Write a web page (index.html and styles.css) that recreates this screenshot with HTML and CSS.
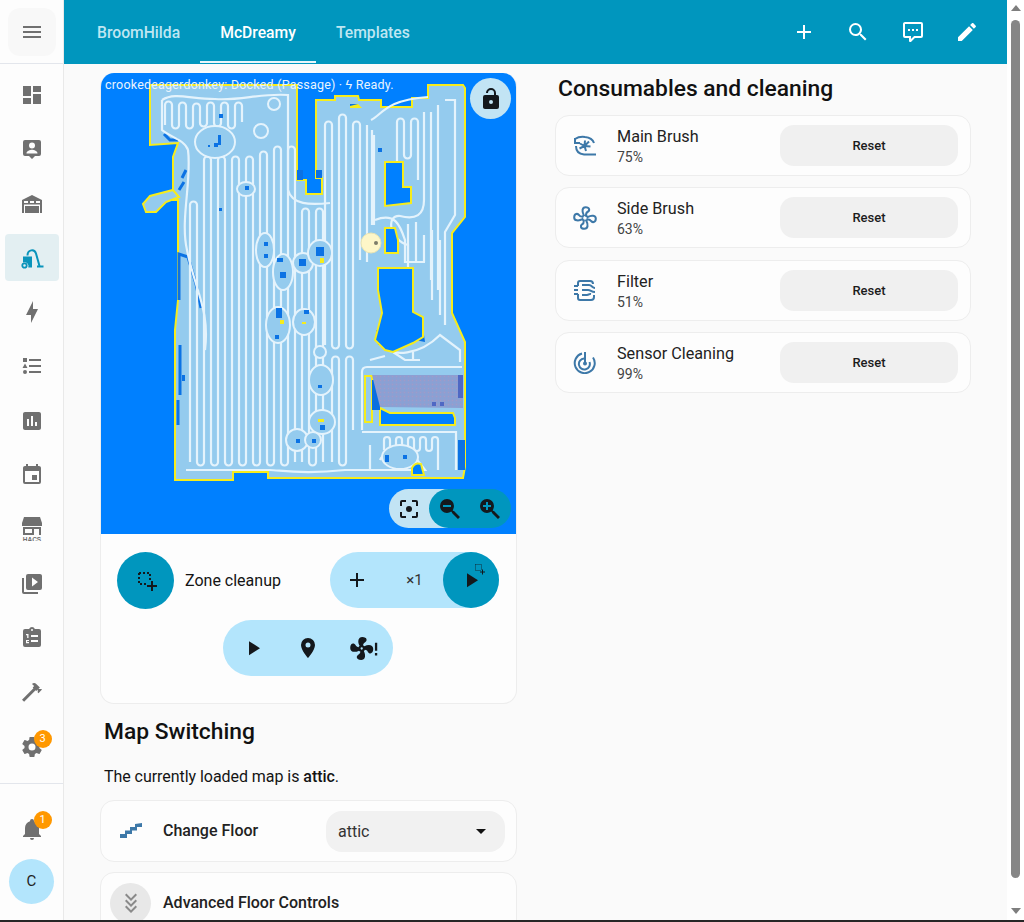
FILE: index.html
```html
<!DOCTYPE html>
<html lang="en">
<head>
  <meta charset="UTF-8">
  <title>McDreamy</title>
  <link rel="stylesheet" href="styles.css">
</head>
<body>
<div class="app">

  <aside class="sidebar">
    <div class="sidebar-head">
      <button class="menu-btn"><svg class="icon" viewBox="0 0 24 24"><path d="M3,6H21V8H3V6M3,11H21V13H3V11M3,16H21V18H3V16Z"/></svg></button>
    </div>
    <nav class="nav">
      <a class="nav-item"><svg class="icon" viewBox="0 0 24 24"><path d="M13,3V9H21V3M13,21H21V11H13M3,21H11V15H3M3,13H11V3H3V13Z"/></svg></a>
      <a class="nav-item"><svg class="icon" viewBox="0 0 24 24"><path fill-rule="evenodd" d="M5,3H19A2,2 0 0,1 21,5V17A2,2 0 0,1 19,19H15L12,22L9,19H5A2,2 0 0,1 3,17V5A2,2 0 0,1 5,3M12,5.5A3,3 0 0,0 12,11.5A3,3 0 0,0 12,5.5M6.5,16.5H17.5C17.5,14 14,12.8 12,12.8C10,12.8 6.5,14 6.5,16.5Z"/></svg></a>
      <a class="nav-item"><svg class="icon" viewBox="0 0 24 24"><path fill-rule="evenodd" d="M12,3L2,8V21H22V8L12,3M4,9H8V11H4V9M10,9H14V11H10V9M16,9H20V11H16V9M4,12.5H20V21H19V14H5V21H4V12.5Z"/><path d="M8,15.5H10V17.5H8ZM11.5,15.5H13.5V17.5H11.5ZM8,18.5H10V20.5H8ZM11.5,18.5H13.5V20.5H11.5ZM15,18.5H17V20.5H15Z"/></svg></a>
      <a class="nav-item active"><svg class="icon" viewBox="0 0 24 24"><path d="M7.5,9.5C7.5,3.5 14.5,2.5 16,7.5L19.5,20" fill="none" stroke="currentColor" stroke-width="2"/><path d="M17,19.5H23.5V21.5H17ZM3,10.5H12V21.5H8.3A4,4 0 0,0 3,16.5Z"/><circle cx="4.5" cy="19.5" r="2.2" fill="none" stroke="currentColor" stroke-width="1.8"/></svg></a>
      <a class="nav-item"><svg class="icon" viewBox="0 0 24 24"><path d="M11 15H6L13 1V9H18L11 23V15Z"/></svg></a>
      <a class="nav-item"><svg class="icon" viewBox="0 0 24 24"><path d="M5,9.5L7.5,14H2.5L5,9.5M3,4H7V8H3V4M5,20A2,2 0 0,0 7,18A2,2 0 0,0 5,16A2,2 0 0,0 3,18A2,2 0 0,0 5,20M9,5V7H21V5H9M9,19H21V17H9V19M9,13H21V11H9V13Z"/></svg></a>
      <a class="nav-item"><svg class="icon" viewBox="0 0 24 24"><path fill-rule="evenodd" d="M19 3H5C3.9 3 3 3.9 3 5V19C3 20.1 3.9 21 5 21H19C20.1 21 21 20.1 21 19V5C21 3.9 20.1 3 19 3M9 17H7V10H9V17M13 17H11V7H13V17M17 17H15V13H17V17Z"/></svg></a>
      <a class="nav-item"><svg class="icon" viewBox="0 0 24 24"><path d="M19,19H5V8H19M16,1V3H8V1H6V3H5C3.89,3 3,3.89 3,5V19A2,2 0 0,0 5,21H19A2,2 0 0,0 21,19V5C21,3.89 20.1,3 19,3H18V1M17,12H12V17H17V12Z"/></svg></a>
      <a class="nav-item"><svg class="icon" viewBox="0 0 24 24"><path d="M4,0H20L22,6V9H2V6ZM3,10H21V18H19V12H14V18H3ZM5,12V16H12V12Z"/><text class="hacs-text" x="12" y="24.5" text-anchor="middle">HACS</text></svg></a>
      <a class="nav-item"><svg class="icon" viewBox="0 0 24 24"><path d="M4,6H2V20A2,2 0 0,0 4,22H18V20H4V6M20,2H8A2,2 0 0,0 6,4V16A2,2 0 0,0 8,18H20A2,2 0 0,0 22,16V4C22,2.89 21.1,2 20,2M12,14.5V5.5L18,10L12,14.5Z"/></svg></a>
      <a class="nav-item"><svg class="icon" viewBox="0 0 24 24"><path fill-rule="evenodd" d="M19,3H14.82C14.4,1.84 13.3,1 12,1C10.7,1 9.6,1.84 9.18,3H5A2,2 0 0,0 3,5V19A2,2 0 0,0 5,21H19A2,2 0 0,0 21,19V5A2,2 0 0,0 19,3M12,3A1,1 0 0,1 12,5A1,1 0 0,1 12,3M11,9H18V11H11V9M11,14H18V16H11V14M6,8H8.5V12H7.2V9.2H6V8M6,14H9V15H7.2V16H9V17.2H6V14Z"/></svg></a>
      <a class="nav-item"><svg class="icon" viewBox="0 0 24 24"><path d="M2 19.63L13.43 8.2L12.72 7.5L14.14 6.07L12 3.89C13.2 2.7 15.09 2.7 16.27 3.89L19.87 7.5L18.45 8.91H21.29L22 9.62L18.45 13.21L17.74 12.5V9.62L16.27 11.04L15.56 10.33L4.13 21.76L2 19.63Z"/></svg></a>
      <a class="nav-item"><svg class="icon" viewBox="0 0 24 24"><path d="M12,15.5A3.5,3.5 0 0,1 8.5,12A3.5,3.5 0 0,1 12,8.5A3.5,3.5 0 0,1 15.5,12A3.5,3.5 0 0,1 12,15.5M19.43,12.97C19.47,12.65 19.5,12.33 19.5,12C19.5,11.67 19.47,11.34 19.43,11L21.54,9.37C21.73,9.22 21.78,8.95 21.66,8.73L19.66,5.27C19.54,5.05 19.27,4.96 19.05,5.05L16.56,6.05C16.04,5.66 15.5,5.32 14.87,5.07L14.5,2.42C14.46,2.18 14.25,2 14,2H10C9.75,2 9.54,2.18 9.5,2.42L9.13,5.07C8.5,5.32 7.96,5.66 7.44,6.05L4.95,5.05C4.73,4.96 4.46,5.05 4.34,5.27L2.34,8.73C2.21,8.95 2.27,9.22 2.46,9.37L4.57,11C4.53,11.34 4.5,11.67 4.5,12C4.5,12.33 4.53,12.65 4.57,12.97L2.46,14.63C2.27,14.78 2.21,15.05 2.34,15.27L4.34,18.73C4.46,18.95 4.73,19.03 4.95,18.95L7.44,17.94C7.96,18.34 8.5,18.68 9.13,18.93L9.5,21.58C9.54,21.82 9.75,22 10,22H14C14.25,22 14.46,21.82 14.5,21.58L14.87,18.93C15.5,18.67 16.04,18.34 16.56,17.94L19.05,18.95C19.27,19.03 19.54,18.95 19.66,18.73L21.66,15.27C21.78,15.05 21.73,14.78 21.54,14.63L19.43,12.97Z"/></svg><span class="badge">3</span></a>
    </nav>
    <div class="sidebar-foot">
      <a class="nav-item"><svg class="icon" viewBox="0 0 24 24"><path d="M21,19V20H3V19L5,17V11C5,7.9 7.03,5.17 10,4.29C10,4.19 10,4.1 10,4A2,2 0 0,1 12,2A2,2 0 0,1 14,4C14,4.1 14,4.19 14,4.29C16.97,5.17 19,7.9 19,11V17L21,19M14,21A2,2 0 0,1 12,23A2,2 0 0,1 10,21"/></svg><span class="badge">1</span></a>
      <div class="avatar">C</div>
    </div>
  </aside>

  <div class="workspace">
    <header class="topbar">
      <div class="tabs">
        <a class="tab">BroomHilda</a>
        <a class="tab active">McDreamy</a>
        <a class="tab">Templates</a>
      </div>
      <div class="top-actions">
        <svg class="icon" viewBox="0 0 24 24"><path d="M19,13H13V19H11V13H5V11H11V5H13V11H19V13Z"/></svg>
        <svg class="icon" viewBox="0 0 24 24"><path d="M9.5,3A6.5,6.5 0 0,1 16,9.5C16,11.11 15.41,12.59 14.44,13.73L14.71,14H15.5L20.5,19L19,20.5L14,15.5V14.71L13.73,14.44C12.59,15.41 11.11,16 9.5,16A6.5,6.5 0 0,1 3,9.5A6.5,6.5 0 0,1 9.5,3M9.5,5C7,5 5,7 5,9.5C5,12 7,14 9.5,14C12,14 14,12 14,9.5C14,7 12,5 9.5,5Z"/></svg>
        <svg class="icon" viewBox="0 0 24 24"><path d="M9,22A1,1 0 0,1 8,21V18H4A2,2 0 0,1 2,16V4C2,2.89 2.9,2 4,2H20A2,2 0 0,1 22,4V16A2,2 0 0,1 20,18H13.9L10.2,21.71C10,21.9 9.75,22 9.5,22V22H9M10,16V19.08L13.08,16H20V4H4V16H10M17,11H15V9H17V11M13,11H11V9H13V11M9,11H7V9H9V11Z"/></svg>
        <svg class="icon" viewBox="0 0 24 24"><path d="M20.71,7.04C21.1,6.65 21.1,6 20.71,5.63L18.37,3.29C18,2.9 17.35,2.9 16.96,3.29L15.12,5.12L18.87,8.87M3,17.25V21H6.75L17.81,9.93L14.06,6.18L3,17.25Z"/></svg>
      </div>
    </header>

    <main class="content">
      <section class="column">
        <div class="card vacuum-card">
          <div class="map">
            <svg class="map-svg" viewBox="100 73 417 461">
              <defs>
                <pattern id="dither" width="4" height="4" patternUnits="userSpaceOnUse">
                  <rect width="4" height="4" fill="#8d9fd2"/>
                  <rect width="1" height="1" fill="#a59ac4"/>
                  <rect x="2" y="2" width="1" height="1" fill="#7fa6d8"/>
                </pattern>
              </defs>
              <!-- floor -->
              <path class="floor" d="M150 85H297V180H306V194H322V178H316V100H335V96H358L359 100H381V107H412V98H428V85H463L465 88V217L452 233V313L465 342V467L463 478H268V472H233V480H175V330L178 300V200L173 200V157L178 143L150 145Z"/>
              <path class="floor" d="M143 204L150 196L173 190L179 197L166 202L156 212L146 212Z"/>
              <!-- darker edges -->
              <path class="dark-edge" d="M179 300V254L188 257L196 284L201 308M180 345V395M178 400V425M164 134L170 140H178M182 178L186 170M179 190L184 182"/>
              <path class="dark" d="M297 170H303V180H297ZM316 178H322V170H316ZM458 440H465V470H458ZM376 330L386 335L389 345H378ZM415 340L424 335L425 342ZM358 108H350V104H358Z"/>
              <!-- cleaning paths -->
              <path class="trail" d="M190 462V205a3.5 3.5 0 0 1 7 0V462a3.5 3.5 0 0 0 7 0V160a3.5 3.5 0 0 1 7 0V462a3.5 3.5 0 0 0 7 0V160a3.5 3.5 0 0 1 7 0V462a3.5 3.5 0 0 0 7 0V160a3.5 3.5 0 0 1 7 0V462a3.5 3.5 0 0 0 7 0V160a3.5 3.5 0 0 1 7 0V462a3.5 3.5 0 0 0 7 0V155a3.5 3.5 0 0 1 7 0V462a3.5 3.5 0 0 0 7 0V150a3.5 3.5 0 0 1 7 0V462a3.5 3.5 0 0 0 7 0V150a3.5 3.5 0 0 1 7 0V462"/>
              <path class="trail" d="M302 462V212a3.5 3.5 0 0 1 7 0V462a3.5 3.5 0 0 0 7 0V212a3.5 3.5 0 0 1 7 0V462"/>
              <path class="trail" d="M165 125V105a3.5 3.5 0 0 1 7 0V125a3.5 3.5 0 0 0 7 0V106a3.5 3.5 0 0 1 7 0V125a3.5 3.5 0 0 0 7 0V107a3.5 3.5 0 0 1 7 0V123a3.5 3.5 0 0 0 7 0V106a3.5 3.5 0 0 1 7 0V123a3.5 3.5 0 0 0 7 0V106a3.5 3.5 0 0 1 7 0V125a3.5 3.5 0 0 0 7 0V106a3.5 3.5 0 0 1 7 0V122"/>
              <path class="trail" d="M162 100C175 92 190 99 215 99C240 101 260 93 288 95V190C292 205 310 205 330 203"/>
              <path class="trail" d="M162 100V130C170 137 185 140 188 150C192 180 180 220 187 250C195 290 210 310 205 350"/>
              <path class="trail" d="M325 345V125a3.5 3.5 0 0 1 7 0V345a3.5 3.5 0 0 0 7 0V118a3.5 3.5 0 0 1 7 0V345a3.5 3.5 0 0 0 7 0V125a3.5 3.5 0 0 1 7 0V260M367 262V125M374 225V135"/>
              <path class="trail" d="M332 462V360a3.5 3.5 0 0 1 7 0V462a3.5 3.5 0 0 0 7 0V360a3.5 3.5 0 0 1 7 0V430"/>
              <path class="trail" d="M397 165V122a3.5 3.5 0 0 1 7 0V155a3.5 3.5 0 0 0 7 0V122a3.5 3.5 0 0 1 7 0V180M424 112V200C424 215 416 220 400 216C385 215 390 240 408 245V262M431 112V280M438 105V290M445 100H455V215L445 232V325M371 120C382 115 385 100 428 97M372 130V225"/>
              <path class="trail" d="M375 220C395 212 400 225 405 240V262H425M408 224V270M416 222V262M424 235V262M432 230V300M440 240V315M382 345C392 358 420 355 440 335L460 350V362"/>
              <path class="trail" d="M385 356L370 360M393 352L405 360H420M413 352V360"/>
              <path class="trail" d="M362 430V372Q362 367 367 367H462M362 432H456V470M384 450V440a3 3 0 0 1 6 0V448a3 3 0 0 0 6 0V440a3 3 0 0 1 6 0V448a3 3 0 0 0 6 0V440a3 3 0 0 1 6 0V448a3 3 0 0 0 6 0V440a3 3 0 0 1 6 0V448a3 3 0 0 0 6 0V440a3 3 0 0 1 6 0V470M370 445V470H425L408 448C395 445 382 455 380 460"/>
              <path class="trail" d="M186 470H270C280 470 300 475 345 470H400"/>
              <!-- round rooms -->
              <ellipse class="blob" cx="215" cy="142" rx="20" ry="16"/>
              <circle class="blob" cx="261" cy="131" r="7"/>
              <circle class="blob" cx="274" cy="104" r="6"/>
              <ellipse class="blob" cx="246" cy="189" rx="9" ry="7"/>
              <ellipse class="blob" cx="265" cy="250" rx="9" ry="17"/>
              <ellipse class="blob" cx="283" cy="272" rx="10" ry="18"/>
              <circle class="blob" cx="303" cy="263" r="10"/>
              <ellipse class="blob" cx="320" cy="253" rx="12" ry="13"/>
              <ellipse class="blob" cx="278" cy="325" rx="12" ry="18"/>
              <ellipse class="blob" cx="304" cy="322" rx="11" ry="13"/>
              <ellipse class="blob" cx="321" cy="380" rx="12" ry="15"/>
              <ellipse class="blob" cx="322" cy="422" rx="13" ry="12"/>
              <circle class="blob" cx="297" cy="440" r="11"/>
              <circle class="blob" cx="313" cy="440" r="8"/>
              <circle class="blob" cx="320" cy="352" r="6"/>
              <ellipse class="blob" cx="400" cy="457" rx="18" ry="12"/>
              <!-- specks -->
              <path class="dark" d="M218 135H221V145H218ZM214 143H218V147H214ZM208 145H210V147H208ZM245 186H249V190H245ZM264 242H268V246H264ZM264 254H268V258H264ZM277 258H283V262H277ZM280 272H286V278H280ZM299 259H306V266H299ZM316 247H324V256H316ZM276 308H282V318H276ZM304 310H309V314H304ZM275 335H279V339H275ZM320 425H325V430H320ZM296 439H300V443H296ZM312 439H316V443H312ZM385 455H389V462H385ZM403 455H407V459H403ZM318 385V388H322V385ZM219 114H223V118H219ZM219 208H222V211H219ZM378 148H382V152H378ZM182 375H185V381H182Z"/>
              <path class="spark" d="M280 320H284V324H280ZM302 322H306V324H302ZM318 419H324V422H318ZM320 258H324V263H320ZM350 106L358 104L362 108H350Z"/>
              <!-- blue holes -->
              <path class="hole" d="M385 162H403V187H411V203L385 206Z"/>
              <path class="hole" d="M385 228H395L398 240V253H385Z"/>
              <path class="hole" d="M378 268H413V312L423 317V337L413 343L393 352L385 350L375 340L382 313L378 290Z"/>
              <path class="hole" d="M380 408L390 413H453L455 418V425H380Z"/>
              <path class="hole" d="M412 475V468Q415 462 421 464L424 475Z"/>
              <!-- grey room -->
              <path class="yellow-line" d="M365 376H372V422H365Z"/>
              <path d="M372 380H380V410H372Z" fill="#0a6fe0"/>
              <path d="M372 375H463V408L380 407Z" fill="url(#dither)"/>
              <path d="M458 375H463V398H458ZM432 402H436V406H432ZM440 402H444V406H440Z" fill="#4f68c4"/>
              <!-- robot -->
              <circle cx="371" cy="243" r="10" fill="#fdf6c8" stroke="#e9e4b2"/>
              <circle cx="376" cy="243" r="2" fill="#7c7c68"/>
            </svg>
            <div class="map-status">crookedeagerdonkey: Docked (Passage) · ϟ Ready.</div>
            <button class="map-lock"><svg class="icon" viewBox="0 0 24 24"><path d="M18,8A2,2 0 0,1 20,10V20A2,2 0 0,1 18,22H6C4.89,22 4,21.1 4,20V10A2,2 0 0,1 6,8H15V6A3,3 0 0,0 12,3A3,3 0 0,0 9,6H7A5,5 0 0,1 12,1A5,5 0 0,1 17,6V8H18M12,17A2,2 0 0,0 14,15A2,2 0 0,0 12,13A2,2 0 0,0 10,15A2,2 0 0,0 12,17Z"/></svg></button>
            <div class="map-tools">
              <span class="tool-focus"><svg class="icon" viewBox="0 0 24 24"><path d="M12,9A3,3 0 0,0 9,12A3,3 0 0,0 12,15A3,3 0 0,0 15,12A3,3 0 0,0 12,9M19,19H15V21H19A2,2 0 0,0 21,19V15H19M19,3H15V5H19V9H21V5A2,2 0 0,0 19,3M5,5H9V3H5A2,2 0 0,0 3,5V9H5M5,15H3V19A2,2 0 0,0 5,21H9V19H5V15Z"/></svg></span>
              <span class="tool-zoom">
                <svg class="icon" viewBox="0 0 24 24"><path d="M9,2A7,7 0 0,1 16,9C16,10.57 15.5,12 14.61,13.19L15.41,14H16L22,20L20,22L14,16V15.41L13.19,14.61C12,15.5 10.57,16 9,16A7,7 0 0,1 2,9A7,7 0 0,1 9,2M5,8V10H13V8H5Z" fill-rule="evenodd"/></svg>
                <svg class="icon" viewBox="0 0 24 24"><path d="M9,2A7,7 0 0,1 16,9C16,10.57 15.5,12 14.61,13.19L15.41,14H16L22,20L20,22L14,16V15.41L13.19,14.61C12,15.5 10.57,16 9,16A7,7 0 0,1 2,9A7,7 0 0,1 9,2M8,5V8H5V10H8V13H10V10H13V8H10V5H8Z" fill-rule="evenodd"/></svg>
              </span>
            </div>
          </div>
          <div class="vacuum-controls">
            <div class="zone-row">
              <span class="zone-btn"><svg class="icon" viewBox="0 0 24 24"><path d="M5 5H16V14M5 5V16H14" fill="none" stroke="currentColor" stroke-width="2" stroke-dasharray="2 2"/><path d="M17 13H19V17H23V19H19V23H17V19H13V17H17Z"/></svg></span>
              <span class="zone-label">Zone cleanup</span>
              <div class="zone-pill">
                <svg class="icon" viewBox="0 0 24 24"><path d="M19,13H13V19H11V13H5V11H11V5H13V11H19V13Z"/></svg>
                <span class="zone-count">×1</span>
                <span class="zone-start">
                  <svg class="icon" viewBox="0 0 24 24"><path d="M8,5.14V19.14L19,12.14L8,5.14Z"/></svg>
                  <svg class="zone-mini" viewBox="0 0 24 24"><path d="M3 3H15V13M3 3V15H13" fill="none" stroke="currentColor" stroke-width="1.6" stroke-dasharray="2 2"/><path d="M16 13H18V17H22V19H18V23H16V19H12V17H16Z"/></svg>
                </span>
              </div>
            </div>
            <div class="action-pill">
              <svg class="icon" viewBox="0 0 24 24"><path d="M8,5.14V19.14L19,12.14L8,5.14Z"/></svg>
              <svg class="icon" viewBox="0 0 24 24"><path d="M12,11.5A2.5,2.5 0 0,1 9.5,9A2.5,2.5 0 0,1 12,6.5A2.5,2.5 0 0,1 14.5,9A2.5,2.5 0 0,1 12,11.5M12,2A7,7 0 0,0 5,9C5,14.25 12,22 12,22C12,22 19,14.25 19,9A7,7 0 0,0 12,2Z"/></svg>
              <svg class="icon fan-alert" viewBox="2 2 24 20"><path d="M12,11A1,1 0 0,0 11,12A1,1 0 0,0 12,13A1,1 0 0,0 13,12A1,1 0 0,0 12,11M12.5,2C17,2 17.11,5.57 14.75,6.75C13.76,7.24 13.32,8.29 13.13,9.22C13.61,9.42 14.03,9.73 14.35,10.13C18.05,8.13 22.03,8.92 22.03,12.5C22.03,17 18.46,17.1 17.28,14.73C16.78,13.74 15.72,13.3 14.79,13.11C14.59,13.59 14.28,14 13.88,14.34C15.87,18.03 15.08,22 11.5,22C7,22 6.91,18.42 9.27,17.24C10.25,16.75 10.69,15.71 10.89,14.79C10.4,14.59 9.97,14.27 9.65,13.87C5.96,15.85 2,15.07 2,11.5C2,7 5.56,6.89 6.74,9.26C7.24,10.25 8.29,10.68 9.22,10.87C9.41,10.39 9.73,9.97 10.14,9.65C8.15,5.96 8.94,2 12.5,2Z"/><path d="M23.500,7H25.500V14H23.500ZM23.500,16H25.500V18H23.500Z"/></svg>
            </div>
          </div>
        </div>

        <h2 class="section-title map-title">Map Switching</h2>
        <p class="section-text">The currently loaded map is <b>attic</b>.</p>

        <div class="card row-card">
          <svg class="icon row-icon" viewBox="0 0 24 24"><path d="M1 19V15H6V11.500H11V8H16V5L23 4V8H18V11.500H13V15H8V19Z"/></svg>
          <span class="row-name">Change Floor</span>
          <div class="select"><span>attic</span><i class="select-arrow"></i></div>
        </div>
        <div class="card row-card">
          <span class="row-circle"><svg class="icon" viewBox="0 0 24 24"><path d="M16.6,2.6L18,4L12,10L6,4L7.4,2.6L12,7.2L16.6,2.6M16.6,8.6L18,10L12,16L6,10L7.4,8.6L12,13.2L16.6,8.6M16.6,14.6L18,16L12,22L6,16L7.4,14.6L12,19.2L16.6,14.6Z"/></svg></span>
          <span class="row-name">Advanced Floor Controls</span>
        </div>
      </section>

      <section class="column column-right">
        <h2 class="section-title">Consumables and cleaning</h2>
        <div class="consumables">
          <div class="card consumable">
            <svg class="icon row-icon" viewBox="0 0 24 24"><path class="line-icon" d="M2 5C5 3 8 2.5 12 3C17 3.5 20 6 21 9M3 12C3 17 6 20 11 20.5H23"/><path class="line-icon" d="M2 4V9H7M12 6.5L11.5 12L7 9.5M11.5 12L6.5 14.5M11.5 12L13 17M11.5 12L17.5 12.5M11.5 12L16 7.5"/></svg>
            <div class="consumable-text"><div class="consumable-name">Main Brush</div><div class="consumable-value">75%</div></div>
            <button class="reset-btn">Reset</button>
          </div>
          <div class="card consumable">
            <svg class="icon row-icon" viewBox="2 2 20 20"><path class="line-icon thin" d="M12.5,3C16,3 16.1,5.8 14.3,6.8C13.3,7.3 12.8,8.4 12.8,10.2C13.5,10.4 13.9,10.8 14.1,11.2C17.5,9.3 21,9.8 21,12.5C21,16 18,16 17,14.4C16.5,13.5 15.5,13.2 14,13C13.8,13.6 13.4,14 13,14.1C15,17.8 14.4,21 11.5,21C8,21 8,18.2 9.7,17.2C10.7,16.7 11,15.6 11,14C10.5,13.8 10.1,13.4 9.9,13C6.5,14.8 3,14.3 3,11.5C3,8 6,8 7,9.6C7.5,10.6 8.5,10.9 10,11C10.2,10.4 10.6,10 11,9.8C9.2,6.3 9.6,3 12.5,3Z"/></svg>
            <div class="consumable-text"><div class="consumable-name">Side Brush</div><div class="consumable-value">63%</div></div>
            <button class="reset-btn">Reset</button>
          </div>
          <div class="card consumable">
            <svg class="icon row-icon" viewBox="0 0 24 24"><path class="line-icon" d="M5 5Q5 3 7 3H17Q20 3 20 6M5 19V20Q5 22 7 22H18Q21 22 21 19V17M1 8H5M1 12H5M1 16H5M5 5V8M5 16V19M9 7H16C19 7 19 10 22 10M9 12H15C18 12 18 14 22 14M9 17H14C16 17 16 15.500 18 16"/></svg>
            <div class="consumable-text"><div class="consumable-name">Filter</div><div class="consumable-value">51%</div></div>
            <button class="reset-btn">Reset</button>
          </div>
          <div class="card consumable">
            <svg class="icon row-icon" viewBox="0 0 24 24"><path class="line-icon" d="M9 3.500A10 10 0 1 0 20 7.500M11 8.500A5.500 5.500 0 1 0 16.500 12"/><path class="line-icon" d="M12 2V12"/><circle cx="12" cy="13.500" r="2"/></svg>
            <div class="consumable-text"><div class="consumable-name">Sensor Cleaning</div><div class="consumable-value">99%</div></div>
            <button class="reset-btn">Reset</button>
          </div>
        </div>
      </section>
    </main>
  </div>

  <div class="scroll-rail">
    <i class="scroll-up"></i>
    <i class="scroll-thumb"></i>
    <i class="scroll-down"></i>
  </div>
</div>
</body>
</html>
```

FILE: styles.css
```css
* {
  box-sizing: border-box;
}
body {
  margin: 0;
  font-family: Roboto, "Liberation Sans", sans-serif;
  background: #fafafa;
  color: #141414;
}
.icon {
  display: block;
  width: 24px;
  height: 24px;
  fill: currentColor;
  flex: none;
}
button {
  border: none;
  font-family: inherit;
  padding: 0;
}

.app {
  display: flex;
  height: 922px;
  overflow: hidden;
  border-bottom: 2px solid #262626;
}

/* sidebar */
.sidebar {
  width: 64px;
  flex: none;
  display: flex;
  flex-direction: column;
  background: #fdfdfd;
  border-right: 1px solid #e9e9e9;
  color: #707070;
}
.sidebar-head {
  height: 64px;
  flex: none;
  display: flex;
  align-items: center;
  justify-content: center;
  border-bottom: 1px solid #e3e6ec;
}
.menu-btn {
  width: 48px;
  height: 48px;
  border-radius: 12px;
  background: #f8f8f8;
  color: #707070;
  display: flex;
  align-items: center;
  justify-content: center;
}
.nav {
  padding-top: 7.5px;
  display: flex;
  flex-direction: column;
  gap: 7.3px;
  align-items: center;
}
.nav-item {
  position: relative;
  width: 54px;
  height: 47px;
  flex: none;
  border-radius: 4px;
  display: flex;
  align-items: center;
  justify-content: center;
}
.nav-item.active {
  background: #e3eff2;
  color: #0a94bb;
}
.hacs-text {
  font: bold 6.5px "Liberation Sans", sans-serif;
}
.badge {
  position: absolute;
  left: 29px;
  top: 7px;
  width: 18px;
  height: 18px;
  border-radius: 50%;
  background: #ff9800;
  color: #fff;
  font-size: 11px;
  line-height: 18px;
  text-align: center;
}
.sidebar-foot .badge {
  top: 6px;
}
.sidebar-foot {
  margin-top: auto;
  padding: 21px 0 16px;
  display: flex;
  flex-direction: column;
  align-items: center;
  gap: 7px;
  border-top: 1px solid #e3e6ec;
}
.avatar {
  width: 45px;
  height: 45px;
  border-radius: 50%;
  background: #b3e5fc;
  color: #222;
  font-size: 15px;
  line-height: 45px;
  text-align: center;
}

/* top bar */
.workspace {
  flex: 1;
  min-width: 0;
  display: flex;
  flex-direction: column;
}
.topbar {
  height: 64px;
  flex: none;
  display: flex;
  align-items: center;
  justify-content: space-between;
  padding: 0 28px 0 13px;
  background: #0096be;
  color: #fff;
}
.tabs {
  display: flex;
  height: 100%;
}
.tab {
  position: relative;
  padding: 0 20px;
  font-size: 15.7px;
  font-weight: 500;
  line-height: 66px;
  color: #bfe6f2;
}
.tab.active {
  color: #fff;
}
.tab.active::after {
  content: "";
  position: absolute;
  left: 0;
  right: 0;
  bottom: 1px;
  height: 2px;
  background: #e8f6fa;
}
.top-actions {
  display: flex;
  gap: 30.300px;
}

/* content */
.content {
  flex: 1;
  min-height: 0;
  display: flex;
  gap: 38px;
  padding: 9px 0 0 36px;
  overflow: hidden;
}
.column {
  width: 417px;
  flex: none;
}
.column-right {
  width: 416px;
}
.card {
  background: #fdfdfd;
  border: 1px solid #ededed;
  border-radius: 14px;
}
.section-title {
  margin: 0 0 11px;
  padding: 1px 0 0 3px;
  font-size: 22.800px;
  font-weight: 500;
  line-height: 30px;
  color: #111;
}
.map-title {
  margin-top: 12px;
  margin-bottom: 0;
  padding-left: 4px;
}
.section-text {
  margin: 18px 0 11px;
  padding-left: 4px;
  font-size: 16px;
  line-height: 24px;
  letter-spacing: -0.05px;
}
.section-text b {
  font-weight: 500;
}

/* vacuum card */
.vacuum-card {
  border-radius: 14px;
  overflow: hidden;
  border-top: none;
}
.map {
  position: relative;
  height: 461px;
  background: #0080ff;
  margin: 0 -1px;
}
.map-svg {
  display: block;
  width: 417px;
  height: 461px;
}
.floor {
  fill: #94cbee;
  stroke: #f6ec1c;
  stroke-width: 2;
}
.dark {
  fill: #0b72e4;
}
.dark-edge {
  fill: none;
  stroke: #0b72e4;
  stroke-width: 3;
}
.spark {
  fill: #f6ec1c;
}
.hole {
  fill: #0080ff;
  stroke: #f6ec1c;
  stroke-width: 2;
}
.yellow-line {
  fill: none;
  stroke: #f6ec1c;
  stroke-width: 2;
}
.trail {
  fill: none;
  stroke: #e4f3fc;
  stroke-width: 2.200;
}
.blob {
  fill: #94cbee;
  stroke: #e4f3fc;
  stroke-width: 2;
}
.map-status {
  position: absolute;
  left: 5px;
  top: 4px;
  font-size: 12.500px;
  line-height: 16px;
  letter-spacing: 0.2px;
  color: #e9f4fd;
}
.map-lock {
  position: absolute;
  top: 5px;
  right: 6px;
  width: 41px;
  height: 41px;
  border-radius: 50%;
  background: #c2e4f4;
  color: #14181c;
  display: flex;
  align-items: center;
  justify-content: center;
}
.map-tools {
  position: absolute;
  right: 6px;
  bottom: 6px;
  width: 122px;
  height: 39px;
  display: flex;
}
.tool-focus {
  width: 61px;
  margin-right: -21px;
  padding-left: 8px;
  border-radius: 20px 0 0 20px;
  background: #c2e4f4;
  color: #14181c;
  display: flex;
  align-items: center;
}
.tool-zoom {
  position: relative;
  flex: 1;
  padding: 0 9px;
  border-radius: 20px;
  background: #0096be;
  color: #14181c;
  display: flex;
  align-items: center;
  justify-content: space-between;
}
.vacuum-controls {
  padding: 18px 17px 27px 16px;
  display: flex;
  flex-direction: column;
  align-items: center;
  gap: 12px;
}
.zone-row {
  width: 100%;
  height: 56px;
  display: flex;
  align-items: center;
}
.zone-btn {
  width: 57px;
  height: 57px;
  flex: none;
  border-radius: 50%;
  background: #0096be;
  color: #14181c;
  display: flex;
  align-items: center;
  justify-content: center;
}
.zone-label {
  margin-left: 11px;
  font-size: 16px;
}
.zone-pill {
  margin-left: auto;
  width: 169px;
  height: 56px;
  border-radius: 28px;
  background: #b3e5fc;
  color: #14181c;
  display: flex;
  align-items: center;
  padding-left: 15px;
}
.zone-count {
  width: 57px;
  margin-left: 17px;
  text-align: center;
  font-size: 15px;
  color: #333;
}
.zone-start {
  position: relative;
  margin-left: auto;
  width: 56px;
  height: 56px;
  border-radius: 50%;
  background: #0096be;
  display: flex;
  align-items: center;
  justify-content: center;
}
.zone-mini {
  position: absolute;
  right: 13px;
  top: 11px;
  width: 12px;
  height: 12px;
  fill: currentColor;
}
.action-pill {
  width: 170px;
  height: 56px;
  border-radius: 28px;
  background: #b3e5fc;
  color: #14181c;
  display: flex;
  align-items: center;
  justify-content: space-between;
  padding: 0 15px 0 18px;
}
.fan-alert {
  width: 28px;
  height: 23px;
}

/* rows */
.row-card {
  height: 62px;
  margin-bottom: 10px;
  display: flex;
  align-items: center;
  padding: 0 11px 0 18px;
}
.row-icon {
  color: #3d78a8;
}
.row-name {
  margin-left: 20px;
  margin-bottom: 2px;
  font-size: 16px;
  font-weight: 500;
  color: #222;
}
.row-circle {
  width: 41px;
  height: 41px;
  margin-left: -9px;
  margin-right: -8px;
  border-radius: 50%;
  background: #e8e8e8;
  color: #8a8a8a;
  display: flex;
  align-items: center;
  justify-content: center;
  flex: none;
}
.select {
  margin-left: auto;
  width: 179px;
  height: 41px;
  border-radius: 16px;
  background: #f1f1f1;
  display: flex;
  align-items: center;
  justify-content: space-between;
  padding: 0 19px 0 12px;
  font-size: 16px;
  color: #333;
}
.select-arrow {
  width: 0;
  height: 0;
  border-left: 5px solid transparent;
  border-right: 5px solid transparent;
  border-top: 5px solid #111;
}

/* consumables */
.consumables {
  display: flex;
  flex-direction: column;
  gap: 11.300px;
}
.consumable {
  height: 61px;
  display: flex;
  align-items: center;
  padding: 0 12px 0 17px;
}
.line-icon {
  fill: none;
  stroke: currentColor;
  stroke-width: 2;
}
.line-icon.thin {
  stroke-width: 1.700;
}
.consumable-text {
  margin-left: 20px;
  padding-top: 3px;
}
.consumable-name {
  font-size: 16.200px;
  line-height: 20px;
  color: #222;
}
.consumable-value {
  font-size: 14px;
  line-height: 20px;
  color: #444;
}
.reset-btn {
  margin-left: auto;
  width: 178px;
  height: 41px;
  border-radius: 14px;
  background: #f0f0f0;
  font-size: 13px;
  font-weight: 500;
  color: #1c1c1c;
}

/* fake window scrollbar */
.scroll-rail {
  width: 17px;
  flex: none;
  display: flex;
  flex-direction: column;
  align-items: center;
  padding: 5px 0 6px;
  background: #fff;
}
.scroll-up,
.scroll-down {
  width: 0;
  height: 0;
  border-left: 5px solid transparent;
  border-right: 5px solid transparent;
}
.scroll-up {
  border-bottom: 6px solid #7e7e7e;
}
.scroll-down {
  margin-top: auto;
  border-top: 6px solid #7e7e7e;
}
.scroll-thumb {
  width: 9px;
  height: 858px;
  margin-top: 9px;
  border-radius: 5px;
  background: #868686;
}
```
